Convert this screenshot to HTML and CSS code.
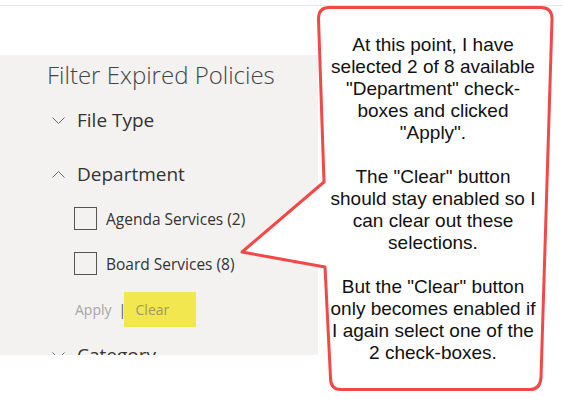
FILE: index.html
```html
<!DOCTYPE html>
<html lang="en">
<head>
  <meta charset="utf-8">
  <title>Filter Expired Policies</title>
  <link rel="stylesheet" href="styles.css">
</head>
<body>
  <div class="topbar"></div>

  <!-- Filter pane -->
  <div class="panel">
    <div class="panel-title">Filter Expired Policies</div>

    <div class="group">
      <svg class="chev" width="13" height="7" viewBox="0 0 13 7"><path d="M0.5 0.5 L6.5 6.5 L12.5 0.5" /></svg>
      <span>File Type</span>
    </div>

    <div class="group group-open">
      <svg class="chev" width="13" height="7" viewBox="0 0 13 7"><path d="M0.5 6.5 L6.5 0.5 L12.5 6.5" /></svg>
      <span>Department</span>
    </div>

    <label class="option"><span class="box"></span>Agenda Services (2)</label>
    <label class="option"><span class="box"></span>Board Services (8)</label>

    <div class="actions">
      <span class="apply">Apply</span>
      <span class="sep">|</span>
      <span class="clear">Clear</span>
    </div>

    <div class="group group-last">
      <svg class="chev" width="13" height="7" viewBox="0 0 13 7"><path d="M0.5 0.5 L6.5 6.5 L12.5 0.5" /></svg>
      <span>Category</span>
    </div>
  </div>

  <!-- Callout note over the page -->
  <div class="callout">
    <svg class="callout-shape" width="563" height="399" viewBox="0 0 563 399">
      <path d="M329 7.5 L541 7.5 Q552 7.5 552 19 L541 378 Q540 389.5 530 389.5 L341 389.5 Q330.5 389.5 330.5 378 L325 267 L242 252 L324 182 L318.5 19 Q318.5 7.5 329 7.5 Z" />
    </svg>
    <div class="callout-text">
      <p>At this point, I have selected 2 of 8 available "Department" check-boxes and clicked "Apply".</p>
      <p>The "Clear" button should stay enabled so I can clear out these selections.</p>
      <p>But the "Clear" button only becomes enabled if I again select one of the 2 check-boxes.</p>
    </div>
  </div>
</body>
</html>
```

FILE: styles.css
```css
body {
  margin: 0;
  font-family: "Open Sans", "Noto Sans", sans-serif;
  background: #fff;
  color: #333;
}
.topbar {
  margin-top: 5px;
  height: 49px;
  border-top: 1px solid #e6e6e6;
}
/* Filter pane */
.panel {
  width: 318px;
  height: 300px;
  background: #f3f2f1;
  overflow: hidden;
  box-sizing: border-box;
  padding-left: 47px;
}
.panel-title {
  height: 38px;
  display: flex;
  align-items: center;
  font-size: 24px;
  font-weight: 300;
  color: #444;
}
.group {
  height: 54px;
  display: flex;
  align-items: center;
  margin-left: 5px;
  font-size: 19px;
  color: #333;
  box-sizing: border-box;
}
.group-open {
  height: 49px;
  padding-top: 5px;
}
.group-last {
  height: 44px;
}
.chev {
  fill: none;
  stroke: #666;
  stroke-width: 1;
  margin-right: 12px;
}
.option {
  height: 45px;
  display: flex;
  align-items: center;
  margin-left: 27px;
  font-size: 15.5px;
  color: #333;
}
.box {
  width: 21px;
  height: 21px;
  border: 1px solid #555;
  margin-right: 9px;
}
.actions {
  height: 47px;
  display: flex;
  align-items: center;
  margin-left: 28px;
  font-size: 14px;
}
.apply {
  color: #a6a6a6;
  margin-right: 7px;
}
.sep {
  width: 5px;
  color: #555;
}
.clear {
  background: #f2e74f;
  color: #a09a5e;
  width: 60px;
  height: 35px;
  line-height: 35px;
  padding-left: 12px;
}
/* Callout note */
.callout {
  position: absolute;
  top: 0;
  left: 0;
  width: 563px;
  height: 399px;
}
.callout-shape {
  position: absolute;
  top: 0;
  left: 0;
}
.callout-shape path {
  fill: #fff;
  stroke: #f24848;
  stroke-width: 3;
  stroke-linejoin: round;
}
.callout-text {
  position: absolute;
  top: 34px;
  left: 326px;
  width: 214px;
  font-family: "Liberation Sans", Arial, sans-serif;
  font-size: 19px;
  line-height: 22px;
  text-align: center;
  color: #111;
}
.callout-text p {
  margin: 0 0 22px;
}
```
